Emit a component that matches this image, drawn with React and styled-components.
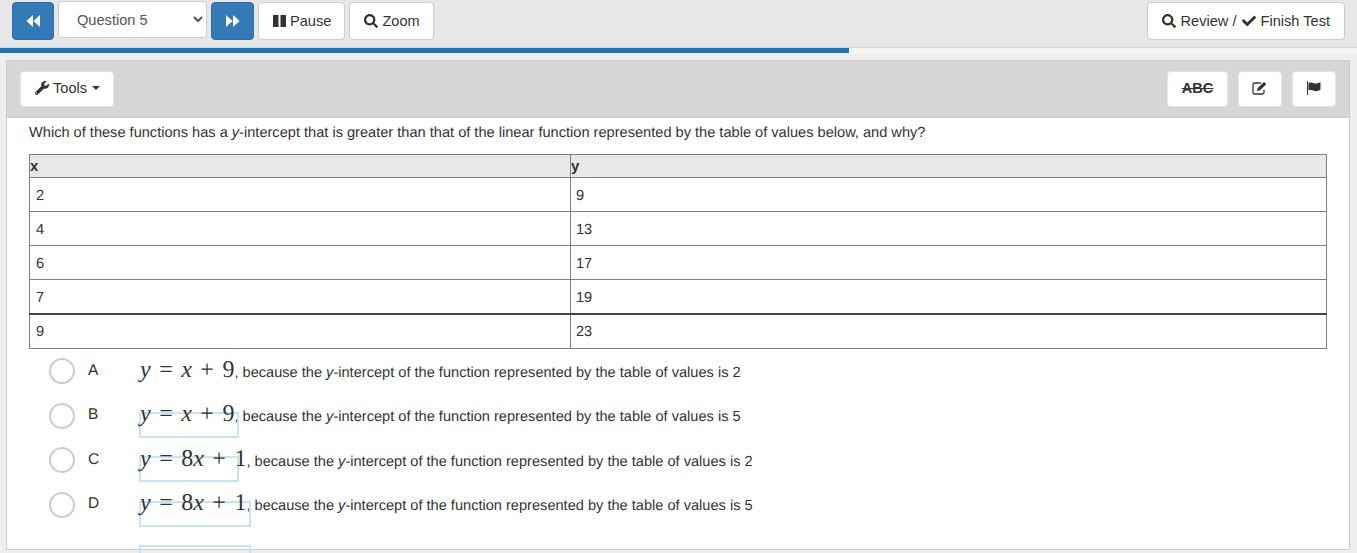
import React from 'react';
import styled, { createGlobalStyle } from 'styled-components';
import { FaSearch, FaCheck, FaWrench } from 'react-icons/fa';

const GlobalStyle = createGlobalStyle`
  html, body {
    margin: 0;
    height: 553px;
    overflow: hidden;
    background: #eeeeee;
    font-family: "Liberation Sans", Arial, sans-serif;
    font-size: 14.6px;
    color: #333333;
    text-rendering: geometricPrecision;
  }
`;

const TopBar = styled.div`
  display: flex;
  justify-content: space-between;
  height: 48px;
  padding: 1px 12px 0;
  box-sizing: border-box;
  background: #e7e7e7;
  border-bottom: 1px solid #d4d4d4;
`;

const Group = styled.div`
  display: flex;
  align-items: flex-start;
  gap: ${props => props.gap || 4}px;
`;

const Button = styled.button`
  display: inline-flex;
  align-items: center;
  justify-content: center;
  gap: 4px;
  height: 38px;
  width: ${props => (props.width ? `${props.width}px` : 'auto')};
  margin-top: 1px;
  padding: ${props => (props.width ? '0' : '0 13px 0 14px')};
  box-sizing: border-box;
  background: ${props => (props.primary ? '#337ab7' : '#ffffff')};
  color: ${props => (props.primary ? '#ffffff' : '#333333')};
  border: 1px solid ${props => (props.primary ? '#2e6da4' : '#cccccc')};
  border-radius: 4px;
  font-family: inherit;
  font-size: 14.6px;
  white-space: nowrap;
`;

const ReviewButton = styled(Button)`
  gap: 5px;
  padding: 0 14px;
`;

const QuestionSelect = styled.select`
  width: 149px;
  height: 37px;
  padding: 0 14px;
  background: #ffffff;
  color: #555555;
  border: 1px solid #cccccc;
  border-radius: 4px;
  font-family: inherit;
  font-size: 14.6px;
`;

const Progress = styled.div`
  height: 6px;
  background: #f5f5f5;
`;

const ProgressFill = styled.div`
  height: 5px;
  background: #1b75bb;
`;

const Panel = styled.div`
  height: 490px;
  margin: 6px 7px 0 6px;
  box-sizing: border-box;
  background: #ffffff;
  border: 1px solid #cccccc;
`;

const PanelHead = styled.div`
  display: flex;
  justify-content: space-between;
  align-items: center;
  height: 57px;
  padding: 0 13px;
  box-sizing: border-box;
  background: #d6d6d6;
  border-bottom: 1px solid #cccccc;
`;

const ToolButton = styled(Button)`
  height: 36px;
  margin-top: 0;
  padding-bottom: 2px;
  border-color: #e6e6e6;
`;

const Abc = styled.s`
  font-weight: bold;
  color: #333333;
`;

const Question = styled.p`
  margin: 0;
  padding: 7px 22px 0;
  line-height: 17px;
`;

const DataTable = styled.table`
  width: 1297px;
  margin: 12px 0 0 22px;
  border-collapse: collapse;
  table-layout: fixed;

  th {
    height: 21px;
    padding: 1px 0 0;
    background: #e8e8e8;
    border: 1px solid #7f7f7f;
    text-align: left;
    font-size: 15px;
    line-height: 20px;
  }

  td {
    height: 31px;
    padding: 2px 5px 0;
    border: 1px solid #7f7f7f;
  }

  td:first-child {
    padding-left: 6px;
  }

  tr:last-child td {
    height: 33px;
    padding-top: 0;
    border-top: 2px solid #444444;
  }
`;

const Options = styled.div`
  display: flex;
  flex-direction: column;
  padding-left: 42px;
`;

const Option = styled.div`
  display: flex;
  align-items: center;
  height: 44.5px;
`;

const Radio = styled.span`
  width: 22px;
  height: 22px;
  background: #ffffff;
  border: 2px solid #cccccc;
  border-radius: 50%;
`;

const Letter = styled.span`
  width: 52px;
  margin-left: 13px;
  margin-top: -1px;
  font-size: 15.5px;
`;

const Text = styled.span`
  margin-top: -2px;
  white-space: nowrap;
`;

const Math = styled.span`
  position: relative;
  display: inline-block;
  font-family: "Liberation Serif", "Times New Roman", serif;
  font-size: 24px;
  line-height: 25px;
  word-spacing: 2.5px;

  i {
    font-style: italic;
  }
`;

/* stray answer outlines that sit one row below each formula */
const Outline = styled.span`
  position: absolute;
  top: 54px;
  left: -1px;
  right: -5px;
  height: 22px;
  border: 2px solid #c5e3f9;
`;

const Backward = () => (
  <svg width="16" height="14" viewBox="0 0 16 14" fill="currentColor">
    <path d="M8 1v12L1.500 7zM15 1v12L8.500 7z" />
  </svg>
);

const Forward = () => (
  <svg width="16" height="14" viewBox="0 0 16 14" fill="currentColor">
    <path d="M1 1v12l6.500-6zM8 1v12l6.500-6z" />
  </svg>
);

const Pause = () => (
  <svg width="13" height="14" viewBox="0 0 13 14" fill="currentColor">
    <path d="M0 1h5.500v12H0zM7.500 1H13v12H7.500z" />
  </svg>
);

const EditIcon = () => (
  <svg width="16" height="14" viewBox="0 0 16 14" fill="none" stroke="currentColor">
    <path d="M12 9v2.500a1.500 1.500 0 0 1-1.500 1.500h-8A1.500 1.500 0 0 1 1 11.500v-8A1.500 1.500 0 0 1 2.500 2H9" strokeWidth="1.300" />
    <path d="M5 10l.7-3L12 1l2.300 2.200L8 9.300z" fill="currentColor" stroke="none" />
  </svg>
);

const FlagIcon = () => (
  <svg width="16" height="14" viewBox="0 0 16 14" fill="currentColor">
    <path d="M1 0h1v14H1zM2.500 2c3-1.500 5.500 1 8 .5 1.500-.3 3-1 4-1.500v7.500c-1.500 1-3 1.700-4.500 1.700-2.500 0-4.500-2-7.500-.7z" />
  </svg>
);

const Caret = styled.span`
  width: 0;
  height: 0;
  margin-left: 1px;
  border-top: 4px solid #333333;
  border-left: 4px solid transparent;
  border-right: 4px solid transparent;
`;

const rows = [[2, 9], [4, 13], [6, 17], [7, 19], [9, 23]];

const answers = [
  { letter: 'A', tail: ' = x + 9', lead: 2 },
  { letter: 'B', tail: ' = x + 9', lead: 5 },
  { letter: 'C', tail: ' = 8x + 1', lead: 2 },
  { letter: 'D', tail: ' = 8x + 1', lead: 5 },
];

const Formula = ({ tail }) => {
  const parts = tail.split('x');
  return (
    <Math>
      <i>y</i>
      {parts[0]}
      <i>x</i>
      {parts[1]}
      <Outline />
    </Math>
  );
};

export default function App() {
  return (
    <>
      <GlobalStyle />
      <TopBar>
        <Group>
          <Button primary width={42}><Backward /></Button>
          <QuestionSelect defaultValue="5">
            <option value="5">Question 5</option>
          </QuestionSelect>
          <Button primary width={43}><Forward /></Button>
          <Button><Pause /> Pause</Button>
          <Button><FaSearch size={14} /> Zoom</Button>
        </Group>
        <Group>
          <ReviewButton><FaSearch size={14} /> Review / <FaCheck size={14} /> Finish Test</ReviewButton>
        </Group>
      </TopBar>
      <Progress>
        <ProgressFill style={{ width: `${(849 / 1357) * 100}%` }} />
      </Progress>
      <Panel>
        <PanelHead>
          <ToolButton><FaWrench size={14} /> Tools <Caret /></ToolButton>
          <Group gap={10}>
            <ToolButton width={61}><Abc>ABC</Abc></ToolButton>
            <ToolButton width={44}><EditIcon /></ToolButton>
            <ToolButton width={44}><FlagIcon /></ToolButton>
          </Group>
        </PanelHead>
        <Question>
          Which of these functions has a <i>y</i>-intercept that is greater than that of the linear function represented by the table of values below, and why?
        </Question>
        <DataTable>
          <colgroup>
            <col width="541" />
            <col width="756" />
          </colgroup>
          <thead>
            <tr><th>x</th><th>y</th></tr>
          </thead>
          <tbody>
            {rows.map(row => (
              <tr key={row[0]}><td>{row[0]}</td><td>{row[1]}</td></tr>
            ))}
          </tbody>
        </DataTable>
        <Options>
          {answers.map(a => (
            <Option key={a.letter}>
              <Radio />
              <Letter>{a.letter}</Letter>
              <Text>
                <Formula tail={a.tail} />, because the <i>y</i>-intercept of the function represented by the table of values is {a.lead}
              </Text>
            </Option>
          ))}
        </Options>
      </Panel>
    </>
  );
}
